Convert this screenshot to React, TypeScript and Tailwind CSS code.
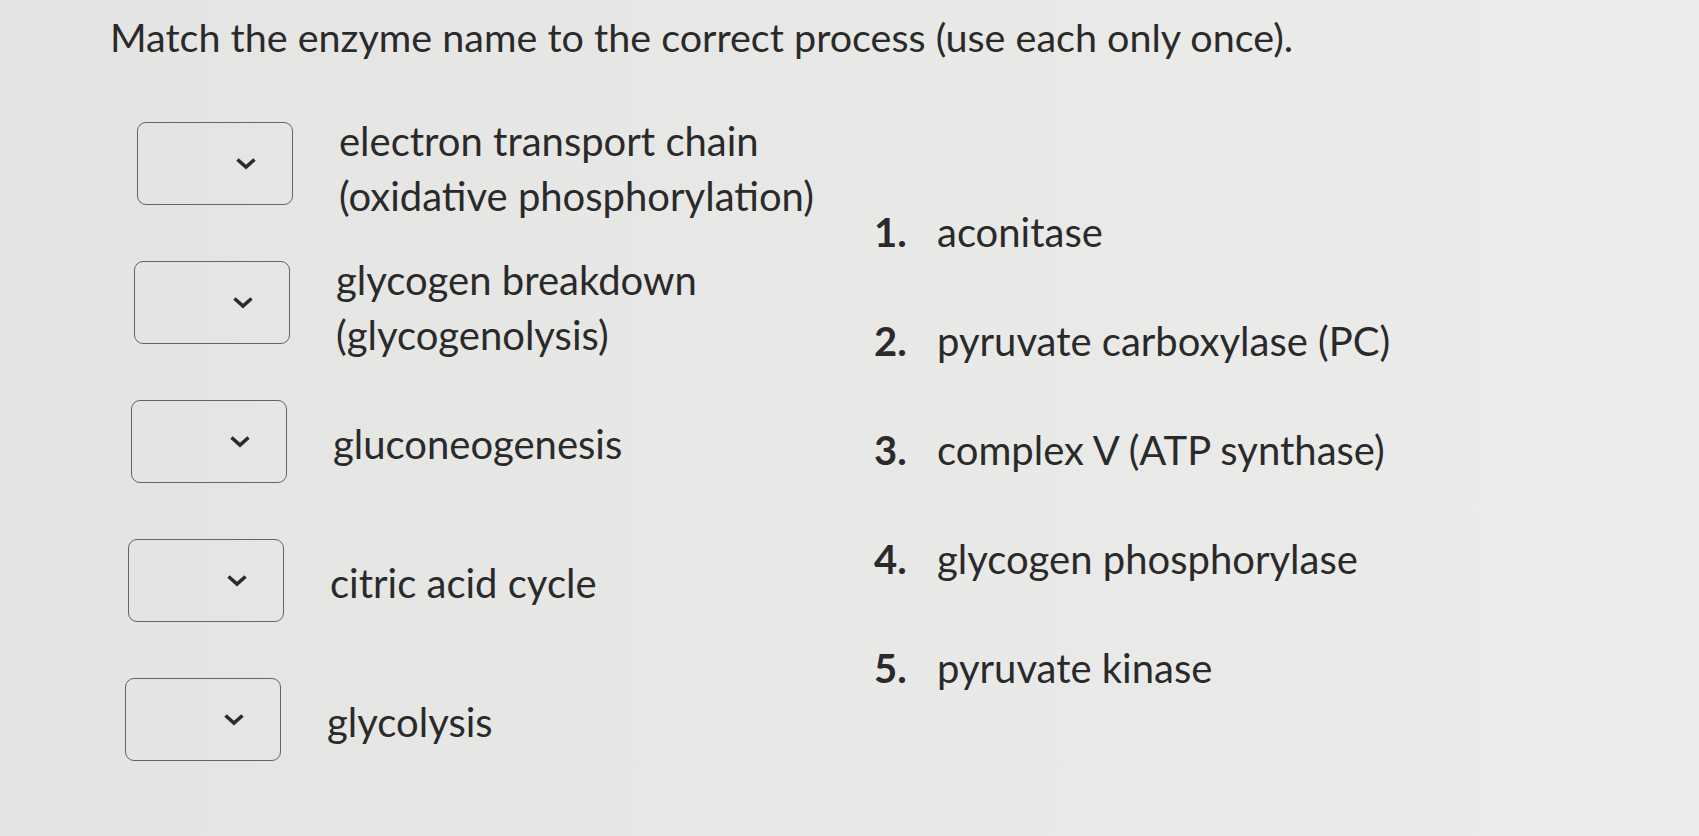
import React from "react";

type Process = {
  lines: string[];
  shift: string;
};

const processes: Process[] = [
  { lines: ["electron transport chain", "(oxidative phosphorylation)"], shift: "ml-[27px]" },
  { lines: ["glycogen breakdown", "(glycogenolysis)"], shift: "ml-[24px]" },
  { lines: ["gluconeogenesis"], shift: "ml-[21px]" },
  { lines: ["citric acid cycle"], shift: "ml-[18px]" },
  { lines: ["glycolysis"], shift: "ml-[15px]" },
];

const enzymes = [
  "aconitase",
  "pyruvate carboxylase (PC)",
  "complex V (ATP synthase)",
  "glycogen phosphorylase",
  "pyruvate kinase",
];

function Chevron() {
  return (
    <svg width="22" height="13" viewBox="0 0 22 13" fill="none" aria-hidden>
      <path d="M2.5 2.5 L11 10 L19.5 2.5" stroke="#2b2b2b" strokeWidth="3.6" strokeLinejoin="miter" />
    </svg>
  );
}

function AnswerSelect() {
  return (
    <button
      type="button"
      className="flex h-[83px] w-[156px] shrink-0 items-center justify-end rounded-[9px] border-[1.8px] border-[#646464] pr-[35px]"
    >
      <Chevron />
    </button>
  );
}

export default function App() {
  return (
    <div
      className="min-h-screen w-full bg-gradient-to-r from-[#e4e4e3] via-[#e8e8e7] to-[#ececeb] pl-[110px] pt-[13px] text-[#2a2a2a]"
      style={{ fontFamily: "Lato, 'Open Sans', sans-serif" }}
    >
      <h1 className="text-[39.5px] font-normal leading-[1.2]">
        Match the enzyme name to the correct process (use each only once).
      </h1>

      <div className="mt-[34px] flex">
        <div className="flex w-[764px] shrink-0 flex-col">
          {processes.map((p) => (
            <div key={p.lines[0]} className={`flex h-[139px] items-center gap-[46px] ${p.shift}`}>
              <AnswerSelect />
              <div
                className={`text-[40px] leading-[55px] ${p.lines.length > 1 ? "pt-[10px]" : "pt-[5px]"}`}
              >
                {p.lines.map((line) => (
                  <div key={line}>{line}</div>
                ))}
              </div>
            </div>
          ))}
        </div>

        <ol className="mt-[83px] flex flex-col">
          {enzymes.map((name, i) => (
            <li key={name} className="flex h-[109px] items-center text-[40px]">
              <span className="w-[63px] font-bold">{i + 1}.</span>
              <span>{name}</span>
            </li>
          ))}
        </ol>
      </div>
    </div>
  );
}
